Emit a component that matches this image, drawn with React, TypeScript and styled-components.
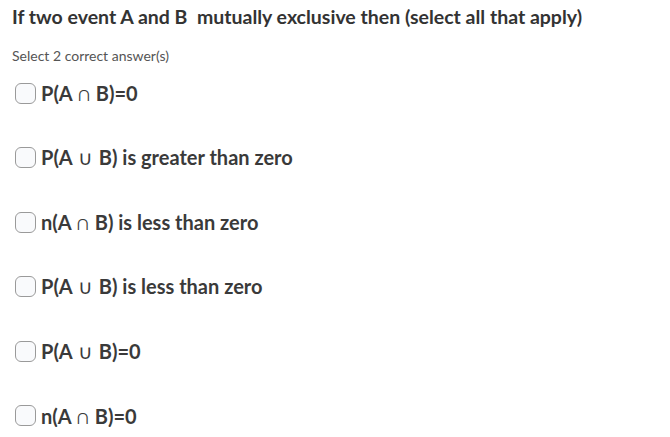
import React from "react";
import styled, { createGlobalStyle } from "styled-components";

const GlobalStyle = createGlobalStyle`
  body {
    margin: 0;
    background: #ffffff;
    font-family: Lato, "Open Sans", sans-serif;
  }
`;

const OPTIONS = [
  "P(A ∩ B)=0",
  "P(A ∪ B) is greater than zero",
  "n(A ∩ B) is less than zero",
  "P(A ∪ B) is less than zero",
  "P(A ∪ B)=0",
  "n(A ∩ B)=0",
];

// set operators look thinner than the surrounding bold text
function renderLabel(text: string) {
  return text.split(/([∩∪])/).map((part, i) =>
    part === "∩" || part === "∪" ? <SetOp key={i}>{part}</SetOp> : part
  );
}

export default function App() {
  return (
    <>
      <GlobalStyle />
      <Container>
        <Title>If two event A and B&nbsp; mutually exclusive then (select all that apply)</Title>
        <Hint>Select 2 correct answer(s)</Hint>
        <List>
          {OPTIONS.map((text) => (
            <Option key={text}>
              <Box />
              <Label>{renderLabel(text)}</Label>
            </Option>
          ))}
        </List>
      </Container>
    </>
  );
}

const Container = styled.div`
  padding: 5px 12px 0 12px;
`;

const Title = styled.div`
  font-size: 19.5px;
  line-height: 24px;
  font-weight: 700;
  color: #333333;
  white-space: nowrap;
`;

const Hint = styled.div`
  margin-top: 18px;
  font-size: 14px;
  line-height: 18px;
  color: #555555;
`;

const List = styled.div`
  display: flex;
  flex-direction: column;
  gap: 42.5px;
  margin-top: 17px;
  padding-left: 3px;
`;

const Option = styled.label`
  display: flex;
  align-items: center;
  gap: 5px;
  height: 22px;
`;

const Box = styled.span`
  flex: none;
  width: 21px;
  height: 21px;
  box-sizing: border-box;
  border: 1.5px solid #9a9a9a;
  border-radius: 6px;
  background: #f9fafc;
`;

const Label = styled.span`
  font-size: 20px;
  font-weight: 700;
  color: #3a3a3a;
`;

const SetOp = styled.span`
  font-weight: 400;
  padding: 0 1px;
`;
